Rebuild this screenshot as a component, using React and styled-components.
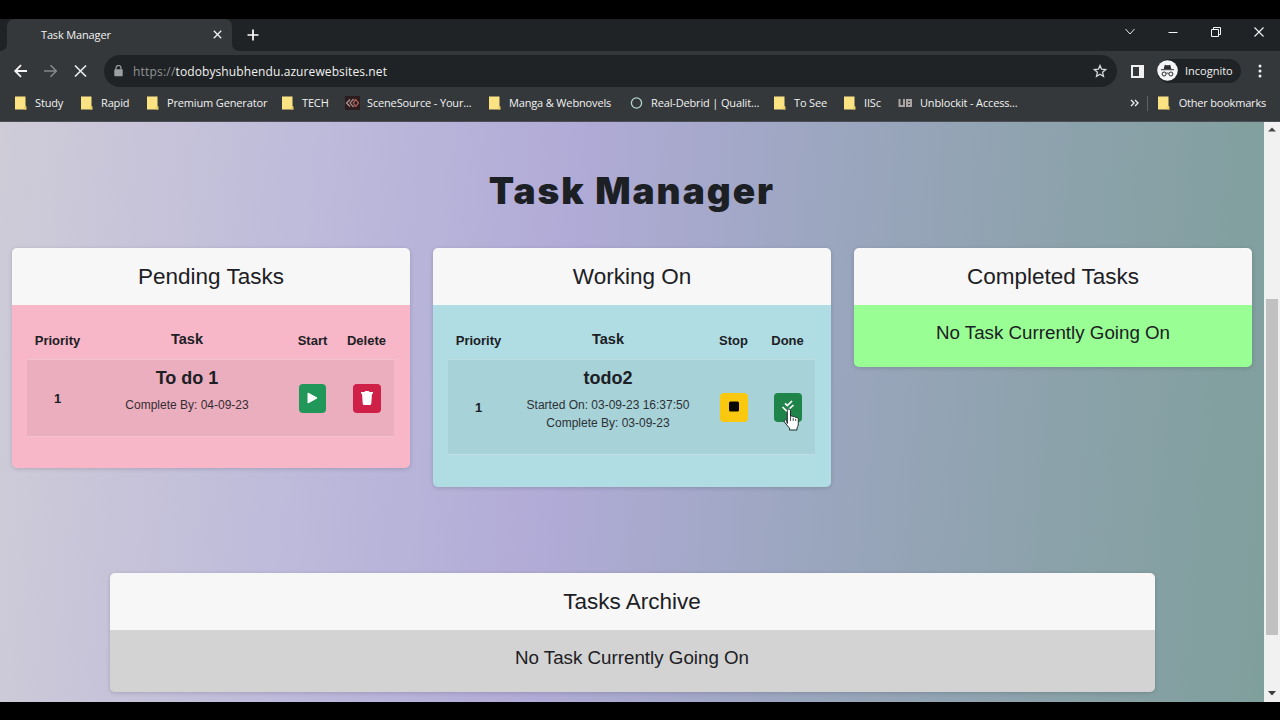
import React from 'react';
import styled, { createGlobalStyle } from 'styled-components';

const bookmarks = [
	{ label: 'Study', width: 66 },
	{ label: 'Rapid', width: 66 },
	{ label: 'Premium Generator', width: 135 },
	{ label: 'TECH', width: 64 },
	{ label: 'SceneSource - Your...', width: 143, icon: 'scene' },
	{ label: 'Manga & Webnovels', width: 142 },
	{ label: 'Real-Debrid | Qualit...', width: 143, icon: 'ring' },
	{ label: 'To See', width: 70 },
	{ label: 'IISc', width: 55 },
	{ label: 'Unblockit - Access...', width: 130, icon: 'ub' },
];

function BookmarkIcon({ type }) {
	if (type === 'scene') {
		return (
			<svg width="15" height="14" viewBox="0 0 15 14" fill="none">
				<rect width="15" height="14" fill="#2c1c1e" />
				<path d="M5 3.5 1.500 7 5 10.500" stroke="#b09a98" strokeWidth="1.200" />
				<path d="M9.500 4 8 3.500 5 7l3 3.500 1.500-.5" stroke="#a9827f" strokeWidth="1.200" />
				<path d="M10.800 3.700 8.300 7l2.500 3.300L13.500 7z" stroke="#b3645e" strokeWidth="1.200" />
			</svg>
		);
	}
	if (type === 'ring') {
		return (
			<svg width="14" height="14" viewBox="0 0 14 14" fill="none">
				<circle cx="6.5" cy="7" r="5.1" stroke="#b4d6cb" strokeWidth="1.3" />
			</svg>
		);
	}
	if (type === 'ub') {
		return (
			<svg width="15" height="14" viewBox="0 0 15 14" fill="none" stroke="#aaa3a1" strokeWidth="2">
				<path d="M1.500 3v7H6V3M9 4v6h4V4zM9 7h4" />
			</svg>
		);
	}
	return (
		<svg width="14" height="14" viewBox="0 0 14 14">
			<path d="M1 .5h10.5v9.6l.8.6v2.8H1z" fill="#fbe384" />
			<path d="M10.3 10.5h2v3h-2z" fill="#e9c95f" />
		</svg>
	);
}

function Browser() {
	return (
		<Chrome>
			<TabStrip>
				<TabEdge />
				<Tab>
					<span>Task Manager</span>
					<svg width="9" height="9" viewBox="0 0 9 9" stroke="#f1f1f1" strokeWidth="1.3"><path d="M.8.8l7.4 7.4M8.2.8.8 8.2" /></svg>
				</Tab>
				<StripRest>
					<svg width="12" height="12" viewBox="0 0 12 12" stroke="#fff" strokeWidth="1.7"><path d="M6 .5v11M.5 6h11" /></svg>
					<WindowButtons>
						<svg width="12" height="12" viewBox="0 0 12 12" fill="none" stroke="#e8e8e8"><path d="M1.500 3 6 8l4.500-5" /></svg>
						<svg width="12" height="12" viewBox="0 0 12 12" stroke="#f4f4f4"><path d="M1.500 6.500h9" /></svg>
						<svg width="12" height="12" viewBox="0 0 12 12" fill="none" stroke="#f4f4f4"><path d="M1.500 3.500h7v7h-7zM3.500 3.500v-2h7v7h-2" /></svg>
						<svg width="12" height="12" viewBox="0 0 12 12" stroke="#f4f4f4" strokeWidth="1.100"><path d="M1.500 1.500l9 9M10.500 1.500l-9 9" /></svg>
					</WindowButtons>
				</StripRest>
			</TabStrip>

			<Toolbar>
				<NavIcons>
					<svg width="16" height="16" viewBox="0 0 16 16" fill="none" stroke="#f5f5f5" strokeWidth="1.800"><path d="M14 8H2.500M8 2.200 2.200 8 8 13.800" /></svg>
					<svg width="16" height="16" viewBox="0 0 16 16" fill="none" stroke="#85888b" strokeWidth="1.600"><path d="M1 8h12M7.500 2.200 13.300 8l-5.800 5.800" /></svg>
					<svg width="16" height="16" viewBox="0 0 16 16" stroke="#e9eaeb" strokeWidth="1.700"><path d="M2 2.500l11 11M13 2.500l-11 11" /></svg>
				</NavIcons>
				<AddressBar>
					<svg width="9" height="12" viewBox="0 0 9 12"><path d="M2 5V3a2.500 2.500 0 0 1 5 0v2" fill="none" stroke="#9da0a3" strokeWidth="1.200" /><rect x=".3" y="4.300" width="8.400" height="7" rx=".8" fill="#9da0a3" /></svg>
					<Url><span>https://</span>todobyshubhendu.azurewebsites.net</Url>
					<svg width="14" height="14" viewBox="0 0 14 14" fill="none" stroke="#d6d7d9" strokeWidth="1.300"><path d="M7 1.500l1.600 3.700 4 .4-3 2.700.9 4L7 10.200 3.500 12.300l.9-4-3-2.700 4-.4z" /></svg>
				</AddressBar>
				<svg width="13" height="13" viewBox="0 0 13 13"><path fillRule="evenodd" d="M0 0h13v13H0zM2 2v9h6V2z" fill="#f1f1f1" /></svg>
				<Incognito>
					<svg width="21" height="21" viewBox="0 0 21 21" fill="none">
						<circle cx="10.500" cy="10.500" r="10.300" fill="#f3f4f5" />
						<path d="M6.700 9 7.800 4.700l1.400.5h2.600l1.400-.5L14.300 9z" fill="#292c2f" />
						<path d="M4 9.700h13M9.200 13.500c.8-.6 1.800-.6 2.600 0" stroke="#292c2f" />
						<circle cx="7.100" cy="14" r="2" stroke="#292c2f" />
						<circle cx="13.900" cy="14" r="2" stroke="#292c2f" />
					</svg>
					<span>Incognito</span>
				</Incognito>
				<svg width="4" height="14" viewBox="0 0 4 14" fill="#f1f1f1"><circle cx="2" cy="2" r="1.500" /><circle cx="2" cy="7" r="1.500" /><circle cx="2" cy="12" r="1.500" /></svg>
			</Toolbar>

			<BookmarkBar>
				{bookmarks.map(item => (
					<Bookmark key={item.label} $width={item.width}>
						<BookmarkIcon type={item.icon} />
						<span>{item.label}</span>
					</Bookmark>
				))}
				<BookmarkEnd>
					<svg width="9" height="8" viewBox="0 0 9 8" fill="none" stroke="#f1f1f1" strokeWidth="1.300"><path d="M1 1l3 3-3 3M5 1l3 3-3 3" /></svg>
					<Divider />
					<BookmarkIcon />
					<span>Other bookmarks</span>
				</BookmarkEnd>
			</BookmarkBar>
		</Chrome>
	);
}

function TaskCard({ title, color, height, actions, children }) {
	return (
		<Card>
			<CardHeader>{title}</CardHeader>
			<CardBody $color={color} $height={height}>
				{actions && (
					<TableHead>
						<span>Priority</span>
						<h5>Task</h5>
						<span>{actions[0]}</span>
						<span>{actions[1]}</span>
					</TableHead>
				)}
				{children}
			</CardBody>
		</Card>
	);
}

export default function App() {
	return (
		<Screen>
			<GlobalStyle />
			<Browser />
			<Viewport>
				<Page>
					<Title>Task Manager</Title>
					<Columns>
						<TaskCard title="Pending Tasks" color="#f7b7c8" height={163} actions={['Start', 'Delete']}>
							<TableRow $height={78}>
								<b>1</b>
								<TaskInfo>
									<h4>To do 1</h4>
									<p>Complete By: 04-09-23</p>
								</TaskInfo>
								<ActionButton $color="#22975a" $width={27}>
									<svg width="14" height="14" viewBox="0 0 14 14"><path d="M2 2v10l9-5z" fill="#fff" stroke="#fff" strokeLinejoin="round" /></svg>
								</ActionButton>
								<ActionButton $color="#cf2148">
									<svg width="12" height="14" viewBox="0 0 12 14" fill="#fff"><path d="M0 1h3.500l.7-1h3.600l.7 1H12v1.700H0zM1 2.600h10l-.7 9.900a1.500 1.500 0 0 1-1.500 1.500H3.200a1.500 1.500 0 0 1-1.500-1.500z" /></svg>
								</ActionButton>
							</TableRow>
						</TaskCard>

						<TaskCard title="Working On" color="#b0dde3" height={182} actions={['Stop', 'Done']}>
							<TableRow $height={96}>
								<b>1</b>
								<TaskInfo>
									<h4>todo2</h4>
									<p>Started On: 03-09-23 16:37:50</p>
									<p>Complete By: 03-09-23</p>
								</TaskInfo>
								<ActionButton $color="#fac80e">
									<svg width="12" height="12" viewBox="0 0 12 12"><rect x="1" y=".5" width="10" height="10" rx="1.500" fill="#080702" /></svg>
								</ActionButton>
								<ActionButton $color="#1f8449">
									<svg width="14" height="16" viewBox="0 0 14 16" fill="none" stroke="#fff" strokeWidth="1.700"><path d="M4 4.300l2.300 2.200 4.700-4.500M1.500 8l4.300 4.200L12.500 6" /></svg>
									<Pointer width="17" height="24" viewBox="0 0 17 24">
										<path d="M4.300 15.500V2.500a1.600 1.600 0 0 1 3.200 0v6c.8-.9 2.300-.6 2.700.4.900-.7 2.200-.3 2.500.7 1.300-.5 2.600.3 2.600 1.700v4.500c0 2-.7 3-1.300 4.300V22H6.500v-1.800L1.400 14c-1-1.500.8-2.900 2.100-1.700z" fill="#fff" stroke="#1c2c2c" />
										<path d="M7.500 9v4M10.200 10v3M12.700 11v2" stroke="#1c2c2c" strokeWidth=".8" />
									</Pointer>
								</ActionButton>
							</TableRow>
						</TaskCard>

						<TaskCard title="Completed Tasks" color="#99ff94" height={62}>
							<Empty>No Task Currently Going On</Empty>
						</TaskCard>
					</Columns>
					<Archive>
						<TaskCard title="Tasks Archive" color="#d3d3d3" height={62}>
							<Empty>No Task Currently Going On</Empty>
						</TaskCard>
					</Archive>
				</Page>
				<Scrollbar>
					<svg width="8" height="5" viewBox="0 0 8 5"><path d="M0 4.500 4 .5l4 4z" fill="#474747" /></svg>
					<Thumb />
					<svg width="8" height="5" viewBox="0 0 8 5"><path d="M0 0l4 4.500L8 0z" fill="#3b3b3b" /></svg>
				</Scrollbar>
			</Viewport>
		</Screen>
	);
}

const GlobalStyle = createGlobalStyle`
	* {
		box-sizing: border-box;
	}

	body {
		margin: 0;
		background-color: #000;
		overflow: hidden;
	}

	h1, h2, h4, h5, p {
		margin: 0;
	}

	svg {
		display: block;
		flex-shrink: 0;
	}
`

const Screen = styled.div`
	width: 1280px;
	height: 720px;
	padding: 19px 0 18px;
	background-color: #000;
	font-family: "Liberation Sans", Arial, sans-serif;
	color: #1c2024;
`

const Chrome = styled.header`
	height: 103px;
	background-color: #35383b;
	border-bottom: 1px solid #4b4d57;
	font-family: "Open Sans", "Noto Sans", sans-serif;
	font-size: 11px;
	color: #f1f2f2;
	white-space: nowrap;
`

const TabStrip = styled.div`
	display: flex;
	height: 32px;
	background: linear-gradient(#202325 50%, #35383b 50%);
`

const TabEdge = styled.div`
	width: 7px;
	background-color: #202325;
	border-bottom-right-radius: 7px;
`

const Tab = styled.div`
	display: flex;
	align-items: center;
	justify-content: space-between;
	width: 225px;
	padding: 0 10px 1px 34px;
	background-color: #35383b;
	border-radius: 7px 7px 0 0;
	letter-spacing: -0.15px;
`

const StripRest = styled.div`
	display: flex;
	align-items: center;
	flex: 1;
	padding-left: 15px;
	padding-right: 15px;
	background-color: #202325;
	border-bottom-left-radius: 7px;
`

const WindowButtons = styled.div`
	display: flex;
	gap: 31px;
	margin-left: auto;
	padding-bottom: 6px;
`

const Toolbar = styled.div`
	display: flex;
	align-items: center;
	height: 40px;
	padding: 0 18px 0 13px;
`

const NavIcons = styled.div`
	display: flex;
	gap: 14px;
	margin-right: 15px;
`

const AddressBar = styled.div`
	display: flex;
	align-items: center;
	width: 1013px;
	height: 32px;
	margin-right: 14px;
	padding: 0 10px;
	border-radius: 16px;
	background-color: #202325;
`

const Url = styled.div`
	flex: 1;
	margin-left: 10px;
	font-size: 12px;
	letter-spacing: 0.1px;

	span {
		letter-spacing: 0.2px;
		color: #909396;
	}
`

const Incognito = styled.div`
	display: flex;
	align-items: center;
	gap: 7px;
	width: 84px;
	height: 24px;
	margin: 0 auto 0 13px;
	padding-bottom: 1px;
	border-radius: 12px;
	background-color: #202325;
`

const BookmarkBar = styled.div`
	display: flex;
	align-items: center;
	height: 24px;
	padding: 0 14px;
	letter-spacing: -0.15px;

	span {
		margin-bottom: 1px;
	}
`

const Bookmark = styled.div`
	display: flex;
	align-items: center;
	gap: 7px;
	width: ${props => props.$width}px;
`

const BookmarkEnd = styled.div`
	display: flex;
	align-items: center;
	gap: 8px;
	margin-left: auto;
	letter-spacing: -0.2px;
`

const Divider = styled.div`
	width: 1px;
	height: 15px;
	margin-right: 1px;
	background-color: #606366;
`

const Viewport = styled.div`
	display: flex;
	height: 580px;
`

const Page = styled.main`
	width: 1264px;
	overflow: hidden;
	background: linear-gradient(95deg, #cfccd8 0%, #bdbadb 25%, #b1abd7 44%, #9ba6bf 64%, #8ca2ab 82%, #7f9f9c 100%);
`

const Title = styled.h1`
	height: 126px;
	padding-top: 44px;
	font-family: Inter, sans-serif;
	font-size: 37px;
	font-weight: 900;
	line-height: 50px;
	letter-spacing: 2px;
	text-align: center;
`

const Columns = styled.div`
	display: grid;
	grid-template-columns: repeat(3, 398px);
	align-items: start;
	justify-content: center;
	gap: 23px;
	height: 325px;
`

const Card = styled.section`
	overflow: hidden;
	border-radius: 5px;
	box-shadow: 0 1px 4px #00000028;
`

const CardHeader = styled.header`
	height: 57px;
	background-color: #f7f7f7;
	font-size: 22.5px;
	line-height: 57px;
	text-align: center;
`

const CardBody = styled.div`
	height: ${props => props.$height}px;
	padding: 15px;
	background-color: ${props => props.$color};
`

const TableHead = styled.div`
	display: grid;
	grid-template-columns: 61px 198px 53px 55px;
	height: 39px;
	padding-top: 8px;
	font-size: 13px;
	font-weight: 700;
	line-height: 26px;
	text-align: center;

	h5 {
		font-size: 14.5px;
		line-height: 22px;
	}
`

const TableRow = styled.div`
	display: grid;
	grid-template-columns: 61px 198px 53px 55px;
	align-items: center;
	justify-items: center;
	width: 367px;
	height: ${props => props.$height}px;
	border: solid #ffffff45;
	border-width: 1px 0;
	background-color: #0000000c;
	font-size: 13px;
`

const TaskInfo = styled.div`
	align-self: start;
	padding-top: 8px;
	text-align: center;

	h4 {
		margin-bottom: 7px;
		font-size: 18px;
		line-height: 21px;
	}

	p {
		font-size: 12px;
		line-height: 18px;
		opacity: 0.9;
	}
`

const ActionButton = styled.button`
	position: relative;
	display: flex;
	align-items: center;
	justify-content: center;
	width: ${props => props.$width || 28}px;
	height: 29px;
	padding: 0;
	border: none;
	border-radius: 4px;
	background-color: ${props => props.$color};
`

/* hand cursor resting on the button */
const Pointer = styled.svg`
	position: absolute;
	top: 15px;
	left: 9px;
`

const Empty = styled.p`
	font-size: 18.75px;
	line-height: 25px;
	text-align: center;
`

const Archive = styled.div`
	width: 1045px;
	margin: 0 auto;
`

const Scrollbar = styled.div`
	display: flex;
	flex-direction: column;
	align-items: center;
	width: 16px;
	padding: 5px 0 6px;
	background-color: #f1f1f1;
`

const Thumb = styled.div`
	width: 12px;
	height: 336px;
	margin: 167px 0 auto;
	background-color: #c1c1c1;
`
